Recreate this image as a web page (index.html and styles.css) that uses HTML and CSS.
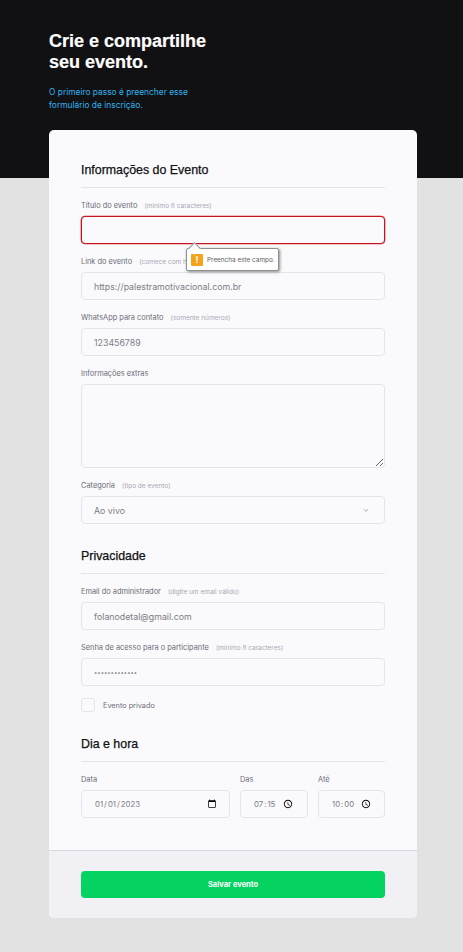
FILE: index.html
```html
<!DOCTYPE html>
<html lang="pt-BR">
<head>
<meta charset="utf-8">
<title>Crie e compartilhe seu evento</title>
<link rel="stylesheet" href="styles.css">
</head>
<body>
<header class="hero">
  <h1>Crie e compartilhe<br>seu evento.</h1>
  <p>O primeiro passo é preencher esse<br>formulário de inscrição.</p>
</header>
<main class="card">
  <form class="form">
    <section class="section">
      <h2>Informações do Evento</h2>
      <div class="field first">
        <label>Título do evento <small>(mínimo 8 caracteres)</small></label>
        <div class="anchor">
          <input class="control invalid" type="text">
          <div class="bubble">
            <span class="bubble-icon">!</span>
            <span>Preencha este campo.</span>
          </div>
        </div>
      </div>
      <div class="field">
        <label>Link do evento <small>(comece com https://)</small></label>
        <input class="control" type="text" value="https://palestramotivacional.com.br">
      </div>
      <div class="field">
        <label>WhatsApp para contato <small>(somente números)</small></label>
        <input class="control" type="text" value="123456789">
      </div>
      <div class="field">
        <label>Informações extras</label>
        <textarea class="control area"></textarea>
      </div>
      <div class="field">
        <label>Categoria <small>(tipo de evento)</small></label>
        <div class="control select">
          <span>Ao vivo</span>
          <svg class="chev" width="6" height="5" viewBox="0 0 6 5" aria-hidden="true"><path d="M1 1.2 3 3.4l2-2.2" fill="none" stroke="#9a9aa4" stroke-width="0.9"/></svg>
        </div>
      </div>
    </section>
    <section class="section">
      <h2>Privacidade</h2>
      <div class="field first">
        <label>Email do administrador <small>(digite um email válido)</small></label>
        <input class="control" type="text" value="folanodetal@gmail.com">
      </div>
      <div class="field">
        <label>Senha de acesso para o participante <small>(mínimo 8 caracteres)</small></label>
        <input class="control pass" type="password" value="1234567890123">
      </div>
      <div class="check">
        <span class="box"></span>
        <span>Evento privado</span>
      </div>
    </section>
    <section class="section">
      <h2>Dia e hora</h2>
      <div class="when">
        <div>
          <label>Data</label>
          <input class="control date" type="date" value="2023-01-01">
        </div>
        <div>
          <label>Das</label>
          <input class="control time" type="time" value="07:15">
        </div>
        <div>
          <label>Até</label>
          <input class="control time" type="time" value="10:00">
        </div>
      </div>
    </section>
    <footer class="actions">
      <button class="save" type="button">Salvar evento</button>
    </footer>
  </form>
</main>
</body>
</html>
```
FILE: styles.css
```css
* { box-sizing: border-box; }
html, body { margin: 0; padding: 0; }
body {
  background: #e2e2e2;
  font-family: "Inter", "Liberation Sans", sans-serif;
  color: #6b6b76;
  height: 952px;
  overflow: hidden;
}
.hero {
  background: #111113;
  height: 178px;
  padding: 31px 49px 0;
}
.hero h1 {
  margin: 0;
  font-family: "Liberation Sans", sans-serif;
  font-size: 18px;
  line-height: 21px;
  font-weight: 700;
  color: #ffffff;
  -webkit-text-stroke: 0.2px #ffffff;
}
.hero p {
  margin: 13px 0 0;
  font-size: 8.4px;
  line-height: 13px;
  color: #33b1ec;
}
.card {
  margin: -48px 46px 0 49px;
  background: #fafafd;
  border-radius: 5px;
  height: 788px;
  overflow: hidden;
}
.section { padding: 32px 32px 0; }
.section + .section { padding-top: 24px; }
h2 {
  margin: 0;
  padding-bottom: 10px;
  height: 26px;
  border-bottom: 1px solid #e4e4ea;
  font-family: "Liberation Sans", sans-serif;
  font-size: 12.4px;
  line-height: 16px;
  font-weight: 400;
  color: #111113;
  -webkit-text-stroke: 0.25px #111113;
}
.field { margin-top: 11px; }
label {
  display: block;
  height: 17px;
  font-size: 7.4px;
  line-height: 14px;
  color: #6b6b76;
  white-space: nowrap;
}
small {
  margin-left: 5px;
  font-size: 6.5px;
  color: #a8a8b3;
}
.anchor { position: relative; }
.control {
  display: block;
  width: 100%;
  height: 28px;
  padding: 0 12px;
  background: #fafafd;
  border: 1px solid #e4e4ea;
  border-radius: 4px;
  font-family: "Inter", "Liberation Sans", sans-serif;
  font-size: 8.8px;
  color: #7c7c86;
  outline: none;
}
.invalid {
  border-color: #c8141e;
  box-shadow: 0 0 0 0.3px #c8141e;
}
.area {
  height: 84px;
  resize: vertical;
}
.select {
  display: flex;
  align-items: center;
  justify-content: space-between;
  padding-right: 15px;
}
.pass { font-size: 5.9px; }
.date, .time { font-size: 7.8px; }
.date::-webkit-calendar-picker-indicator {
  margin-left: 0;
  padding: 0;
  width: 10px;
  height: 10px;
}
.time { padding-right: 10px; }
.time::-webkit-datetime-edit-ampm-field { display: none; }
.time::-webkit-datetime-edit { overflow: visible; flex: 0 0 24px; }
.time::-webkit-calendar-picker-indicator {
  margin-left: 6px;
  padding: 0;
  width: 10px;
  height: 10px;
}
.bubble {
  position: absolute;
  left: 105px;
  top: 32px;
  width: 93px;
  height: 23px;
  display: flex;
  align-items: center;
  gap: 4px;
  padding: 0 4px;
  background: #ffffff;
  border: 1px solid #8f8f8f;
  border-radius: 2px;
  box-shadow: 1px 1px 3px rgba(0, 0, 0, 0.45);
  font-size: 6.4px;
  color: #5e5e5e;
  white-space: nowrap;
}
.bubble::before {
  content: "";
  position: absolute;
  left: 3px;
  top: -5px;
  width: 8px;
  height: 8px;
  background: #ffffff;
  border-left: 1px solid #8f8f8f;
  border-top: 1px solid #8f8f8f;
  transform: rotate(45deg);
}
.bubble-icon {
  flex: none;
  width: 12px;
  height: 12px;
  border-radius: 1px;
  background: #f5a31a;
  color: #ffffff;
  font-size: 9px;
  font-weight: 700;
  line-height: 12px;
  text-align: center;
}
.check {
  display: flex;
  align-items: center;
  gap: 8px;
  margin-top: 12px;
  font-size: 7.3px;
  color: #6b6b76;
}
.box {
  width: 14px;
  height: 14px;
  border: 1px solid #e4e4ea;
  border-radius: 3px;
  background: #fafafd;
}
.when {
  display: grid;
  grid-template-columns: 149px 68px 67px;
  gap: 10px;
  margin-top: 11px;
}
.actions {
  margin-top: 32px;
  height: 68px;
  padding: 20px 32px 0;
  background: #f1f1f5;
  border-top: 1px solid #d8d8de;
}
.save {
  display: block;
  width: 100%;
  height: 27px;
  border: 0;
  border-radius: 4px;
  background: #04d361;
  color: #ffffff;
  font-family: "Inter", "Liberation Sans", sans-serif;
  font-size: 7.5px;
  font-weight: 700;
}
```
